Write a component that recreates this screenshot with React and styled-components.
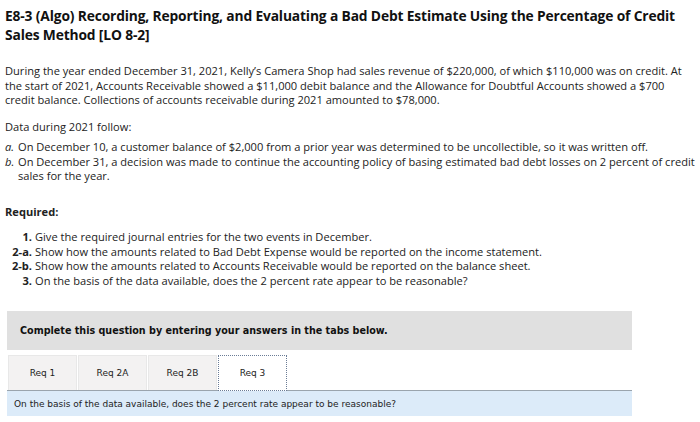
import styled, { createGlobalStyle } from "styled-components";

const Global = createGlobalStyle`
  body {
    margin: 0;
    background: #fff;
    color: #222;
    font-family: "Open Sans", "Liberation Sans", sans-serif;
  }
`;

const Page = styled.div`
  width: 700px;
  height: 422px;
  padding: 6px 5px 0 5px;
  box-sizing: border-box;
  overflow: hidden;
`;

const Title = styled.h1`
  margin: 0;
  font-size: 13.8px;
  line-height: 19px;
  font-weight: 700;
  color: #111;
  letter-spacing: -0.15px;
`;

const Para = styled.p`
  margin: ${(p) => p.$top || 0}px 0 0 0;
  font-size: 11.1px;
  line-height: 14.5px;
`;

const List = styled.ul`
  list-style: none;
  margin: 6px 0 0 0;
  padding: 0;
  font-size: 11.1px;
  line-height: 14.5px;
`;

const Item = styled.li`
  display: flex;
`;

const Marker = styled.span`
  flex: 0 0 ${(p) => p.$w}px;
  text-align: ${(p) => p.$align || "left"};
  font-style: ${(p) => (p.$italic ? "italic" : "normal")};
  font-weight: ${(p) => (p.$bold ? 700 : 400)};
  padding-right: ${(p) => p.$gap || 0}px;
`;

const Heading = styled.div`
  margin-top: 21px;
  font-size: 11.1px;
  line-height: 14.5px;
  font-weight: 700;
`;

const ReqList = styled(List)`
  margin-top: 11px;
`;

const Panel = styled.div`
  margin-top: 23px;
  margin-left: 2px;
  width: 625px;
  font-family: "DejaVu Sans", Verdana, sans-serif;
`;

const Banner = styled.div`
  background: #e0e0e0;
  height: 39px;
  display: flex;
  align-items: center;
  padding-left: 13px;
  font-size: 9.6px;
  font-weight: 700;
  color: #111;
`;

const Tabs = styled.div`
  display: flex;
  gap: 1px;
  margin-top: 5px;
  padding-left: 1px;
  border-bottom: 1px solid #9aa4ad;
`;

const Tab = styled.div`
  width: 69px;
  box-sizing: border-box;
  display: flex;
  align-items: center;
  justify-content: center;
  font-size: 9px;
  color: #222;
  background: ${(p) => (p.$active ? "#fff" : "#f3f2f2")};
  border: ${(p) => (p.$active ? "1px dotted #6a7c96" : "1px solid #e8e8e8")};
  border-bottom: ${(p) => (p.$active ? "1px dotted #6a7c96" : "none")};
  margin-bottom: ${(p) => (p.$active ? "-1px" : "0")};
  height: ${(p) => (p.$active ? "36px" : "35px")};
`;

const Answer = styled.div`
  background: #dcebf9;
  height: 25px;
  display: flex;
  align-items: center;
  padding-left: 7px;
  font-size: 9px;
  color: #222;
`;

const events = [
  ["a.", <>On December 10, a customer balance of $2,000 from a prior year was determined to be uncollectible, so it was written off.</>],
  ["b.", <>On December 31, a decision was made to continue the accounting policy of basing estimated bad debt losses on 2 percent of credit<br />sales for the year.</>],
];

const required = [
  ["1.", "Give the required journal entries for the two events in December."],
  ["2-a.", "Show how the amounts related to Bad Debt Expense would be reported on the income statement."],
  ["2-b.", "Show how the amounts related to Accounts Receivable would be reported on the balance sheet."],
  ["3.", "On the basis of the data available, does the 2 percent rate appear to be reasonable?"],
];

const tabs = ["Req 1", "Req 2A", "Req 2B", "Req 3"];

export default function App() {
  return (
    <>
      <Global />
      <Page>
        <Title>
          E8-3 (Algo) Recording, Reporting, and Evaluating a Bad Debt Estimate Using the Percentage of Credit
          <br />
          Sales Method [LO 8-2]
        </Title>
        <Para $top={20}>
          During the year ended December 31, 2021, Kelly’s Camera Shop had sales revenue of $220,000, of which $110,000 was on credit. At
          <br />
          the start of 2021, Accounts Receivable showed a $11,000 debit balance and the Allowance for Doubtful Accounts showed a $700
          <br />
          credit balance. Collections of accounts receivable during 2021 amounted to $78,000.
        </Para>
        <Para $top={12}>Data during 2021 follow:</Para>
        <List>
          {events.map(([m, t]) => (
            <Item key={m}>
              <Marker $w={13} $italic>
                {m}
              </Marker>
              <span>{t}</span>
            </Item>
          ))}
        </List>
        <Heading>Required:</Heading>
        <ReqList>
          {required.map(([m, t]) => (
            <Item key={m}>
              <Marker $w={27} $gap={3} $align="right" $bold>
                {m}
              </Marker>
              <span>{t}</span>
            </Item>
          ))}
        </ReqList>
        <Panel>
          <Banner>Complete this question by entering your answers in the tabs below.</Banner>
          <Tabs>
            {tabs.map((t, i) => (
              <Tab key={t} $active={i === 3}>
                {t}
              </Tab>
            ))}
          </Tabs>
          <Answer>On the basis of the data available, does the 2 percent rate appear to be reasonable?</Answer>
        </Panel>
      </Page>
    </>
  );
}
